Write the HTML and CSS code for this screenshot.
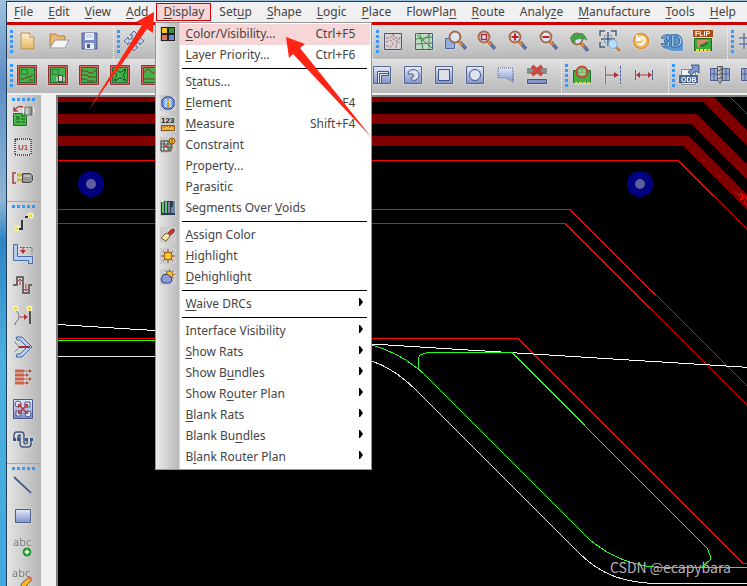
FILE: index.html
```
<!DOCTYPE html>
<html lang="en">
<head>
    <meta charset="utf-8">
    <title>PCB Editor</title>
    <link rel="stylesheet" href="styles.css">
</head>
<body>
    <!-- icon set -->
    <svg class="defs" width="0" height="0">
        <defs>
            <linearGradient id="blue" x1="0" y1="0" x2="0" y2="1"><stop offset="0" stop-color="#e6eaf6"/><stop offset="1" stop-color="#7f92cb"/></linearGradient>
            <linearGradient id="sand" x1="0" y1="0" x2="0" y2="1"><stop offset="0" stop-color="#fff0cc"/><stop offset="1" stop-color="#e5b868"/></linearGradient>
            <linearGradient id="steel" x1="0" y1="0" x2="1" y2="0"><stop offset="0" stop-color="#eee"/><stop offset="1" stop-color="#777"/></linearGradient>
        </defs>
        <symbol id="new" viewBox="0 0 24 24"><path d="M6 4h9l4 4v12H6z" fill="url(#sand)" stroke="#b48a48"/><path d="M15 4v4h4" fill="#fff8e4" stroke="#b48a48"/></symbol>
        <symbol id="open" viewBox="0 0 24 24"><path d="M4 18V5h6l2 2h7v4" fill="#e9b873" stroke="#b0793a"/><path d="M4 19l5-8h14l-4 8z" fill="#f5f5f5" stroke="#999"/></symbol>
        <symbol id="save" viewBox="0 0 24 24"><path d="M5 4h15v16H5z" fill="#7b8dc4" stroke="#46598f"/><path d="M8 4h9v7H8z" fill="#eef1fb"/><path d="M9 6h7M9 8h7" stroke="#b5bdda"/><path d="M8 14h9v6H8z" fill="#e8ebf6"/><path d="M10 15h3v4h-3z" fill="#46598f"/></symbol>
        <symbol id="move" viewBox="0 0 24 24"><path d="M12 2l4 4h-2v4h4V8l4 4-4 4v-2h-4v4h2l-4 4-4-4h2v-4H6v2l-4-4 4-4v2h4V6H8z" fill="#c3d0e4" stroke="#566c91"/></symbol>
        <symbol id="ratsred" viewBox="0 0 24 24"><path d="M3.500 4.500h17v16h-17z" fill="#d4d4d8" stroke="#4c5570"/><path d="M5 9h4l3-4M13 5l-1 5 7 4M5 13l5-2 2 4-4 5M15 19l1-6 4-5M5 17h4M14 9h5" fill="none" stroke="#b37174" stroke-dasharray="3 1"/></symbol>
        <symbol id="ratsgreen" viewBox="0 0 24 24"><path d="M3.500 4.500h17v16h-17z" fill="#c9d6cc" stroke="#44617a"/><path d="M4 10l16-2M8 5l3 15M4 15l16-1M17 5v15M5 6l15 13M10 12l8-7" fill="none" stroke="#3d9144"/></symbol>
        <symbol id="lens" viewBox="0 0 24 24"><path d="M15 13l6 7" stroke="#60739d" stroke-width="4"/><path d="M13 12l4 4" stroke="#e0863c" stroke-width="3"/><circle cx="10" cy="8" r="5.500" fill="#dce4f2" stroke="#a36a46" stroke-width="2"/></symbol>
        <symbol id="zoomfit" viewBox="0 0 24 24"><path d="M2.500 9.500h9v10h-9z" fill="#93aedb" stroke="#4b67a5"/><use href="#lens" x="2" width="24" height="24"/></symbol>
        <symbol id="zoombox" viewBox="0 0 24 24"><use href="#lens" width="24" height="24"/><path d="M7.500 5.500h5v5h-5z" fill="none" stroke="#b22338" stroke-width="1.500"/></symbol>
        <symbol id="zoomin" viewBox="0 0 24 24"><use href="#lens" width="24" height="24"/><path d="M6.500 8h7M10 4.500v7" stroke="#c21d2d" stroke-width="2"/></symbol>
        <symbol id="zoomout" viewBox="0 0 24 24"><use href="#lens" width="24" height="24"/><path d="M6.500 8h7" stroke="#c21d2d" stroke-width="2"/></symbol>
        <symbol id="zoomprev" viewBox="0 0 24 24"><use href="#lens" y="2" width="24" height="24"/><path d="M3 9l5-5v3c5-4 9-4 12 4-4-2-7-2-12 0v3z" fill="#43a548" stroke="#267b37" stroke-width=".500"/></symbol>
        <symbol id="zoomall" viewBox="0 0 24 24"><path d="M2 7V2h5M13 2h5v5M2 13v5h5M10 3v14M3 10h14" fill="none" stroke="#44617a" stroke-width="1.500"/><path d="M6.500 6.500h7v7h-7z" fill="none" stroke="#839ab5"/><path d="M17 17l5 5" stroke="#c48445" stroke-width="3"/><circle cx="15" cy="15" r="4.500" fill="#bcddfa" stroke="#77a4cb"/></symbol>
        <symbol id="redraw" viewBox="0 0 24 24"><circle cx="12" cy="12" r="7.500" fill="#f9bd62" stroke="#d89135" stroke-width="1.500"/><path d="M8 6v5h5M9 10c4-4 8 0 6 3-1 2-3 3-6 2" fill="none" stroke="#fff" stroke-width="2"/></symbol>
        <symbol id="grid" viewBox="0 0 24 24"><path d="M8 4v16M14 4v16M20 4v16M3 9h20M3 15h20" stroke="#61759d" stroke-width="1.500"/></symbol>

        <symbol id="pcb" viewBox="0 0 24 24"><path d="M2.500 2.500h19v19h-19z" fill="#45b249" stroke="#9c2b2f"/><path d="M3.500 3.500h17v17h-17z" fill="none" stroke="#e26464"/><path d="M4.500 4.500h15v15h-15z" fill="none" stroke="#246a33"/></symbol>
        <symbol id="pcb1" viewBox="0 0 24 24"><use href="#pcb" width="24" height="24"/><path d="M6.500 6.500h6v5h-6z" fill="none" stroke="#174f25" stroke-dasharray="1 1"/><path d="M6 16h3l3-2h3l3-2M14 17h4" fill="none" stroke="#743624"/></symbol>
        <symbol id="pcb2" viewBox="0 0 24 24"><use href="#pcb" width="24" height="24"/><path d="M6.500 6.500h6v5h-6z" fill="none" stroke="#174f25" stroke-dasharray="1 1"/><path d="M12.500 12.500h4v6h-4z" fill="#ddd" stroke="#444"/><path d="M11 14v4M18 14v4" stroke="#eee"/></symbol>
        <symbol id="pcb3" viewBox="0 0 24 24"><use href="#pcb" width="24" height="24"/><path d="M5 8h5l3 2h2l4-3M5 12h5l2 2h7M5 16h4l2 2h7" fill="none" stroke="#743624"/></symbol>
        <symbol id="pcb4" viewBox="0 0 24 24"><use href="#pcb" width="24" height="24"/><path d="M7 7h2l2 2h3l2-2M7 17h2l2-2h3l2 2M7 8v2l2 2-2 3M17 8v2l-2 2 2 3" fill="none" stroke="#174f25"/><path d="M6 6h2v2H6zM16 6h2v2h-2zM6 16h2v2H6zM16 16h2v2h-2z" fill="#174f25"/></symbol>
        <symbol id="pcb5" viewBox="0 0 24 24"><use href="#pcb" width="24" height="24"/><path d="M4 10c3 0 3-4 5-4s3 4 5 4 3-3 5-3M5 16h14" fill="none" stroke="#913329"/></symbol>
        <symbol id="tile" viewBox="0 0 24 24"><path d="M3.500 3.500h17v17h-17z" fill="url(#blue)" stroke="#556894"/></symbol>
        <symbol id="shapeadd" viewBox="0 0 24 24"><use href="#tile" width="24" height="24"/><path d="M7.500 20V8.500h11v4h-7V20" fill="#e2e6ee" stroke="#435584"/><path d="M9.500 20v-9.500h9" fill="none" stroke="#435584"/></symbol>
        <symbol id="shapearc" viewBox="0 0 24 24"><use href="#tile" width="24" height="24"/><path d="M7 11c0-6 11-6 11 1 0 6-8 7-8 3 3 0 4-4 1-4z" fill="#dfe3ee" stroke="#435584"/></symbol>
        <symbol id="shaperect" viewBox="0 0 24 24"><use href="#tile" width="24" height="24"/><path d="M6.500 6.500h11v11h-11z" fill="#dfe1e8" stroke="#435584"/></symbol>
        <symbol id="shapecirc" viewBox="0 0 24 24"><use href="#tile" width="24" height="24"/><circle cx="12" cy="12" r="5.500" fill="#dfe3ee" stroke="#435584"/></symbol>
        <symbol id="shapesel" viewBox="0 0 24 24"><path d="M4 5h16v14L11 15H4z" fill="url(#blue)"/><path d="M4 15V5h15v14" fill="none" stroke="#435584" stroke-dasharray="1 1"/><path d="M4 15h8l7 5" fill="none" stroke="#8b96b5"/></symbol>
        <symbol id="shapedel" viewBox="0 0 24 24"><path d="M2 5h20v6H2z" fill="#8c8c8c"/><path d="M7 3l10 9M17 3L7 12" stroke="#cc4a3c" stroke-width="4"/><path d="M2.500 16.500h19v4h-19z" fill="#8195c9" stroke="#43557f"/></symbol>
        <symbol id="drc" viewBox="0 0 24 24"><path d="M3.500 7.500h17v12h-17z" fill="#49ad42" stroke="#1a6a23"/><path d="M5 20h15" stroke="#eada45" stroke-width="2" stroke-dasharray="3 1"/><circle cx="12" cy="9" r="5.500" fill="#79b96a" stroke="#c94040" stroke-width="2"/><path d="M9 8h2M13 8h2M9 11h6" stroke="#d5e8b8"/></symbol>
        <symbol id="gap" viewBox="0 0 24 24"><path d="M4.500 3v18" stroke="#777"/><path d="M19.500 3v18" stroke="#4b638e" stroke-dasharray="3 1"/><path d="M5 12h9" stroke="#a5333a"/><path d="M13 9l5 3-5 3z" fill="#a5333a"/></symbol>
        <symbol id="dim" viewBox="0 0 24 24"><path d="M3.500 7v10M20.500 7v10" stroke="#4b5a80"/><path d="M6 12h12" stroke="#a5333a"/><path d="M4 12l4-3v6zM20 12l-4-3v6z" fill="#a5333a"/></symbol>
        <symbol id="drill" viewBox="0 0 24 24"><path d="M2.500 5.500h19v12h-19z" fill="#9aabd3" stroke="#4a5d8d"/><path d="M6 6v11M18 6v11M3 11h18" stroke="#4a5d8d"/><path d="M9.500 3.500h5v13l-2.500 4-2.500-4z" fill="url(#steel)" stroke="#555"/><path d="M10 8l4-2M10 12l4-2M10 16l4-2" stroke="#555"/></symbol>

        <symbol id="place" viewBox="0 0 24 24"><path d="M2.500 9.500h13v12h-13z" fill="#44b948" stroke="#23702d"/><path d="M5 13h3v2H5M10 12h4M10 15h4M5 18h4M11 18h3" fill="none" stroke="#17571f"/><path d="M4 6c2-4 6-4 8-3M3 3v4h4" fill="none" stroke="#b04040" stroke-width="1.500"/><path d="M14 3h7v8h-7z" fill="url(#steel)" stroke="#666"/><path d="M12.500 4v6M22.500 4v6" stroke="#eee"/></symbol>
        <symbol id="swap" viewBox="0 0 24 24"><path d="M5 7H2v10h3" fill="none" stroke="#ad3c3c" stroke-width="1.500"/><path d="M6 9h6M6 14h6" stroke="#d2b72b" stroke-width="3"/><path d="M11.500 7.500h8l2 2v5l-2 2h-8z" fill="#999" stroke="#444"/><path d="M13 10h6" stroke="#ddd"/></symbol>
        <symbol id="connect" viewBox="0 0 24 24"><path d="M6 18h5v-9h2M14 6h4" fill="none" stroke="#333" stroke-width="2" stroke-dasharray="14 2 3 2"/><path d="M3.500 15.500h4v4h-4zM17.500 2.500h4v4h-4z" fill="#e8dc35" stroke="#fff9ba"/></symbol>
        <symbol id="slide" viewBox="0 0 24 24"><path d="M2.500 2.500v16h15v3h4v-7h-15v-12z" fill="#b5cdf0" stroke="#4a6ba5"/><path d="M9 5.500h12v7" fill="none" stroke="#566787" stroke-dasharray="2 1"/><path d="M12 5v4" stroke="#a5333a"/><path d="M9 8h6l-3 4z" fill="#a5333a"/></symbol>
        <symbol id="delay" viewBox="0 0 24 24"><path d="M2 12h4V4h6v16h6v-8h3" fill="none" stroke="#444" stroke-width="1.500"/><path d="M9 12V6M7 8l2-2 2 2M15 11v7M13 16l2 2 2-2" fill="none" stroke="#ad3338"/></symbol>
        <symbol id="snap" viewBox="0 0 24 24"><path d="M4 5c2 3 4 4 4 8s-4 4-4 8" fill="none" stroke="#666"/><path d="M19 5v15" stroke="#222" stroke-width="1.500"/><path d="M2.500 2.500h4v4h-4zM16.500 2.500h4v4h-4z" fill="#e8dc35" stroke="#fff9ba"/><path d="M9 13h5" stroke="#ad3338"/><path d="M13 10l4 3-4 3z" fill="#ad3338"/></symbol>
        <symbol id="miter" viewBox="0 0 24 24"><path d="M5 2h6l10 10-10 10H5l1-3h3l7-7-7-7H6z" fill="#b4cdf0" stroke="#426397"/><path d="M4 7l4 5-4 5" fill="none" stroke="#445a76" stroke-dasharray="2 1"/><path d="M8 12h11" stroke="#9e2f38" stroke-width="2"/></symbol>
        <symbol id="fanout" viewBox="0 0 24 24"><path d="M4 5h9M4 9h9M4 13h9M4 17h9" stroke="#cc6248" stroke-width="3"/><path d="M13 5h7M13 9h4M13 13h7M13 17h4" stroke="#b2543f"/><path d="M18 3l3 2-3 2zM15 7l3 2-3 2zM18 11l3 2-3 2zM15 15l3 2-3 2z" fill="#b2543f"/></symbol>
        <symbol id="custom" viewBox="0 0 24 24"><path d="M2.500 2.500h19v19h-19z" fill="url(#blue)" stroke="#465b89"/><path d="M14 5h5v5h-5zM5 14h5v5H5z" fill="#dce2f1" stroke="#465b89"/><circle cx="17" cy="17" r="3" fill="#dce2f1" stroke="#465b89"/><circle cx="7" cy="7" r="3" fill="#dce2f1" stroke="#465b89"/><path d="M8 8l8 8M16 8l-8 8" stroke="#b53a42" stroke-width="1.500"/><path d="M7 7h4l-4 4zM17 7h-4l4 4zM7 17h4l-4-4zM17 17h-4l4-4z" fill="#b53a42"/></symbol>
        <symbol id="tune" viewBox="0 0 24 24"><path d="M3 12V7q0-3 3-3h4q3 0 3 3v7q0 2 2 2M7 12V9q0-2 2-2v8q0 4 3 4h5q3 0 3-3v-5M16 16v-5" fill="none" stroke="#46597c" stroke-width="1.500"/><path d="M2 10h3v3H2zM6 10h3v3H6zM14 10h3v3h-3zM19 10h3v3h-3z" fill="#38568c"/></symbol>
        <symbol id="line" viewBox="0 0 24 24"><path d="M3 4l17 16" stroke="#4a5f8b" stroke-width="2"/></symbol>
        <symbol id="rect" viewBox="0 0 24 24"><path d="M4.500 5.500h15v13h-15z" fill="url(#blue)" stroke="#4a5f8b"/></symbol>

        <symbol id="m-color" viewBox="0 0 16 16"><path d="M1 1h14v14H1z" fill="#222"/><path d="M2 2h5v5H2z" fill="#f5c624"/><path d="M9 2h5v5H9z" fill="#3b9138"/><path d="M2 9h5v5H2z" fill="#d9785c"/><path d="M9 9h5v5H9z" fill="#668bd0"/></symbol>
        <symbol id="m-info" viewBox="0 0 16 16"><path d="M5 2h6l3 3v6l-3 3H5l-3-3V5z" fill="#7da4e8" stroke="#1d2e92"/><path d="M5 4h6v8H5z" fill="#b5d1ff"/><path d="M8 4v2M8 7v5" stroke="#c7a30c" stroke-width="2"/></symbol>
        <symbol id="m-constraint" viewBox="0 0 16 16"><path d="M1 4h10v10H1z" fill="#ddd" stroke="#333"/><path d="M1 7h10M1 10h10M4 4v10M8 4v10" stroke="#444"/><path d="M5 8h2v2H5z" fill="#e22"/><path d="M8 10h2v3H8z" fill="#393"/><circle cx="12" cy="4" r="3" fill="#f0b322" stroke="#87530a"/><path d="M12 2v4M12 7v5" stroke="#87530a"/></symbol>
        <symbol id="m-segments" viewBox="0 0 16 16"><path d="M1 1h14v14H1z" fill="#283b55"/><path d="M3 1v12M6 1v12" stroke="#67bf67" stroke-width="2"/><path d="M9 2v11M12 7v6M14 1v12" stroke="#bcd0ed"/><path d="M1 1h2" stroke="#e8eff5" stroke-width="2"/></symbol>
        <symbol id="m-assign" viewBox="0 0 16 16"><path d="M14 2l-3 1-4 4 2 2 5-4z" fill="#d33" stroke="#822"/><path d="M8 6L5 7l-4 4 5 3 4-5z" fill="#f4e6a0" stroke="#6e603b"/></symbol>
        <symbol id="m-sun" viewBox="0 0 16 16"><path d="M8 1v14M1 8h14M3 3l10 10M13 3L3 13" stroke="#9d3d18"/><circle cx="8" cy="8" r="4" fill="#f9c926" stroke="#a44f12"/></symbol>
        <symbol id="m-cloud" viewBox="0 0 16 16"><use href="#m-sun" x="3" y="-1" width="13" height="13"/><path d="M2 13l-1-3 2-4 4-1 4 3 1 4-2 2H4z" fill="#8d9ad5" stroke="#303f84"/></symbol>
        <symbol id="arrow" viewBox="0 0 8 8"><path d="M2 0h1l3 4-3 4H2z" fill="#000"/></symbol>
    </svg>

    <div class="app">
        <nav class="menubar">
            <button><u>F</u>ile</button>
            <button><u>E</u>dit</button>
            <button><u>V</u>iew</button>
            <button><u>A</u>dd</button>
            <div class="dropdown">
                <button class="open"><u>D</u>isplay</button>
                <div class="menu">
                    <button class="active"><svg class="mi"><use href="#m-color"/></svg><span><u>C</u>olor/Visibility...</span><kbd>Ctrl+F5</kbd></button>
                    <button><span><u>L</u>ayer Priority...</span><kbd>Ctrl+F6</kbd></button>
                    <hr>
                    <button><span>S<u>t</u>atus...</span></button>
                    <button><svg class="mi"><use href="#m-info"/></svg><span><u>E</u>lement</span><kbd>F4</kbd></button>
                    <button>
                        <svg class="mi" viewBox="0 0 16 16"><text class="t123" x="1" y="7">123</text><path d="M1.500 9.500h13v5h-13z" fill="#efb33e" stroke="#8c561b"/><path d="M4 9v3M7 9v2M10 9v3M13 9v2" stroke="#8c561b"/></svg>
                        <span><u>M</u>easure</span><kbd>Shift+F4</kbd>
                    </button>
                    <button><svg class="mi"><use href="#m-constraint"/></svg><span>Constra<u>i</u>nt</span></button>
                    <button><span>P<u>r</u>operty...</span></button>
                    <button><span>P<u>a</u>rasitic</span></button>
                    <button><svg class="mi"><use href="#m-segments"/></svg><span>Segments Over <u>V</u>oids</span></button>
                    <hr>
                    <button><svg class="mi"><use href="#m-assign"/></svg><span><u>A</u>ssign Color</span></button>
                    <button><svg class="mi"><use href="#m-sun"/></svg><span><u>H</u>ighlight</span></button>
                    <button><svg class="mi"><use href="#m-cloud"/></svg><span><u>D</u>ehighlight</span></button>
                    <hr>
                    <button><span><u>W</u>aive DRCs</span><svg class="sub"><use href="#arrow"/></svg></button>
                    <hr>
                    <button><span>Interface Visibility</span><svg class="sub"><use href="#arrow"/></svg></button>
                    <button><span><u>S</u>how Rats</span><svg class="sub"><use href="#arrow"/></svg></button>
                    <button><span>Show B<u>u</u>ndles</span><svg class="sub"><use href="#arrow"/></svg></button>
                    <button><span>Show R<u>o</u>uter Plan</span><svg class="sub"><use href="#arrow"/></svg></button>
                    <button><span><u>B</u>lank Rats</span><svg class="sub"><use href="#arrow"/></svg></button>
                    <button><span>Blank Bu<u>n</u>dles</span><svg class="sub"><use href="#arrow"/></svg></button>
                    <button><span>B<u>l</u>ank Router Plan</span><svg class="sub"><use href="#arrow"/></svg></button>
                </div>
            </div>
            <button>Set<u>u</u>p</button>
            <button><u>S</u>hape</button>
            <button><u>L</u>ogic</button>
            <button><u>P</u>lace</button>
            <button>FlowPla<u>n</u></button>
            <button><u>R</u>oute</button>
            <button>Analy<u>z</u>e</button>
            <button><u>M</u>anufacture</button>
            <button><u>T</u>ools</button>
            <button><u>H</u>elp</button>
        </nav>

        <div class="toolbar">
            <div class="group">
                <button aria-label="New"><svg><use href="#new"/></svg></button>
                <button aria-label="Open"><svg><use href="#open"/></svg></button>
                <button aria-label="Save"><svg><use href="#save"/></svg></button>
            </div>
            <div class="group">
                <button aria-label="Move"><svg><use href="#move"/></svg></button>
                <button aria-label="Copy"></button>
                <button aria-label="Delete"></button>
            </div>
            <div class="group">
                <button aria-label="Undo"></button>
                <button aria-label="Redo"></button>
            </div>
            <div class="group">
                <button aria-label="Fix"></button>
                <button aria-label="Unfix"></button>
            </div>
            <div class="group">
                <button aria-label="Unrats all"><svg><use href="#ratsred"/></svg></button>
                <button aria-label="Rats all"><svg><use href="#ratsgreen"/></svg></button>
                <button aria-label="Zoom fit"><svg><use href="#zoomfit"/></svg></button>
                <button aria-label="Zoom points"><svg><use href="#zoombox"/></svg></button>
                <button aria-label="Zoom in"><svg><use href="#zoomin"/></svg></button>
                <button aria-label="Zoom out"><svg><use href="#zoomout"/></svg></button>
                <button aria-label="Zoom previous"><svg><use href="#zoomprev"/></svg></button>
                <button aria-label="Zoom selection"><svg><use href="#zoomall"/></svg></button>
                <button aria-label="Redraw"><svg><use href="#redraw"/></svg></button>
                <button aria-label="3D view">
                    <svg viewBox="0 0 24 24"><path d="M6 5h12q6 4 5 17H12L3 19z" fill="#5d98cf"/><text class="t3d" x="1" y="18">3D</text></svg>
                </button>
                <button aria-label="Flip">
                    <svg viewBox="0 0 24 24"><path d="M2 1h20v7H2z" fill="#a84a12"/><text class="tflip" x="4" y="7">FLIP</text><path d="M3.500 9.500h17v12h-17z" fill="#3ba83b" stroke="#166b20"/><path d="M6 11h12l-4 4-5 4-3-2z" fill="#d68966"/><path d="M9 17c2-1 5 0 7-4" fill="none" stroke="#197525" stroke-width="2"/><path d="M5 21h14" stroke="#f5df47" stroke-width="2" stroke-dasharray="3 1"/></svg>
                </button>
            </div>
            <div class="group">
                <button aria-label="Grid"><svg><use href="#grid"/></svg></button>
            </div>
        </div>

        <div class="toolbar">
            <div class="group">
                <button aria-label="General edit"><svg><use href="#pcb1"/></svg></button>
                <button aria-label="Placement edit"><svg><use href="#pcb2"/></svg></button>
                <button aria-label="Etch edit"><svg><use href="#pcb3"/></svg></button>
                <button aria-label="Shape edit"><svg><use href="#pcb4"/></svg></button>
                <button aria-label="Signal integrity"><svg><use href="#pcb5"/></svg></button>
                <button aria-label="RF edit"></button>
                <button aria-label="Flow planning"></button>
                <button aria-label="Symbol edit"></button>
            </div>
            <div class="group">
                <button aria-label="Polygon"></button>
                <button aria-label="Rectangle"></button>
                <button aria-label="Circle"></button>
                <button aria-label="Shape add"><svg><use href="#shapeadd"/></svg></button>
                <button aria-label="Void polygon"><svg><use href="#shapearc"/></svg></button>
                <button aria-label="Void rectangle"><svg><use href="#shaperect"/></svg></button>
                <button aria-label="Void circle"><svg><use href="#shapecirc"/></svg></button>
                <button aria-label="Edit boundary"><svg><use href="#shapesel"/></svg></button>
                <button aria-label="Delete islands"><svg><use href="#shapedel"/></svg></button>
            </div>
            <div class="group">
                <button aria-label="DRC"><svg><use href="#drc"/></svg></button>
                <button aria-label="Clearance"><svg><use href="#gap"/></svg></button>
                <button aria-label="Dimension"><svg><use href="#dim"/></svg></button>
            </div>
            <div class="group">
                <button aria-label="ODB out">
                    <svg viewBox="0 0 24 24"><path d="M4.500 6.500h14v15h-14z" fill="#f2f2f2" stroke="#888"/><path d="M11 9l5-4-2-3h8v8l-3-2-5 4z" fill="#7f98c6" stroke="#3f5789"/><path d="M2 12h19v8H2z" fill="#496495"/><text class="todb" x="4" y="19">ODB</text></svg>
                </button>
                <button aria-label="NC drill"><svg><use href="#drill"/></svg></button>
                <button aria-label="NC legend"><svg><use href="#drill"/></svg></button>
            </div>
        </div>

        <main class="workspace">
            <div class="sidebar">
                <div class="vgroup">
                    <button aria-label="Place manual"><svg><use href="#place"/></svg></button>
                    <button aria-label="Place part">
                        <svg viewBox="0 0 24 24"><path d="M4 4.500h16M4 19.500h16M4.500 4v16M19.500 4v16" stroke="#3d5c94" stroke-width="3" stroke-dasharray="1 1"/><path d="M5 5h14v14H5z" fill="#d9d9dc"/><text class="tu1" x="7" y="15">U1</text></svg>
                    </button>
                    <button aria-label="Swap pins"><svg><use href="#swap"/></svg></button>
                </div>
                <div class="vgroup">
                    <button aria-label="Add connect"><svg><use href="#connect"/></svg></button>
                    <button aria-label="Slide"><svg><use href="#slide"/></svg></button>
                    <button aria-label="Delay tune"><svg><use href="#delay"/></svg></button>
                    <button aria-label="Custom smooth"><svg><use href="#snap"/></svg></button>
                    <button aria-label="Vertex"><svg><use href="#miter"/></svg></button>
                    <button aria-label="Create fanout"><svg><use href="#fanout"/></svg></button>
                    <button aria-label="Spread"><svg><use href="#custom"/></svg></button>
                    <button aria-label="Phase tune"><svg><use href="#tune"/></svg></button>
                </div>
                <div class="vgroup">
                    <button aria-label="Add line"><svg><use href="#line"/></svg></button>
                    <button aria-label="Add rect"><svg><use href="#rect"/></svg></button>
                    <button aria-label="Add text">
                        <svg viewBox="0 0 24 24"><text class="tabc" x="2" y="11">abc</text><circle cx="16" cy="17" r="4.500" fill="#24992b"/><path d="M13.500 17h5M16 14.500v5" stroke="#fff" stroke-width="1.500"/></svg>
                    </button>
                    <button aria-label="Edit text">
                        <svg viewBox="0 0 24 24"><text class="tabc" x="1" y="11">abc</text><path d="M9 22l2-5 7-6 3 3-7 7z" fill="#f5b52c" stroke="#79563a"/><path d="M17 12l3 3 2-2-3-3z" fill="#dc7060"/></svg>
                    </button>
                </div>
            </div>

            <div class="board">
                <svg viewBox="58 97 689 489" preserveAspectRatio="xMinYMin slice">
                    <g fill="none" shape-rendering="crispEdges">
                        <!-- wide traces -->
                        <g stroke="#800000" stroke-width="10">
                            <path d="M58 97H706L766 157"/>
                            <path d="M58 119H694L766 191"/>
                            <path d="M58 141H686L766 221"/>
                        </g>
                        <g stroke="#ff0000">
                            <path d="M730 97l30 30"/>
                            <path d="M58 160.500H678L766 248"/>
                            <path d="M58 209.500H570L766 405"/>
                            <path d="M58 223.500H565L766 424"/>
                            <path d="M58 338.500H518L743 563.500H766"/>
                            <path d="M738 196l3-3 2 3-3 3 1 1 4-4 2 3-3 3 3 3"/>
                        </g>
                        <path stroke="#fff" d="M58 324.500L766 368.500"/>
                        <g stroke="#1eff1e">
                            <path d="M58 340.500H340C370 341 400 352 424 374L590 540C607 554 630 567.500 665 567.500H766"/>
                            <path d="M424 374L419 369 418 359 420 355 427 352.500H512L707 548 710 555V560L702 567"/>
                        </g>
                        <path stroke="#e6e6e6" d="M58 356.500H340C372 357 392 367 415 389L577 551C600 575 625 583.500 660 583.500H766"/>
                    </g>
                    <g fill="#000080"><circle cx="91" cy="184" r="13"/><circle cx="640" cy="184" r="13"/></g>
                    <g fill="#5f5f9f"><circle cx="91" cy="184" r="5"/><circle cx="640" cy="184" r="5"/></g>
                    <text class="watermark" x="610" y="573">CSDN @ecapybara</text>
                </svg>
            </div>
        </main>
    </div>

    <!-- callout arrows on top of everything -->
    <svg class="callouts" width="400" height="150" fill="#ff2414">
        <path d="M154 12L136 22 142 25 88 111 147 29 153 33z"/>
        <path d="M286 37L305 44 300 48 372 138 293 54 289 58z"/>
    </svg>
</body>
</html>
```
FILE: styles.css
```
* {
    box-sizing: border-box;
}

body {
    margin: 0;
    height: 100vh;
    overflow: hidden;
    position: relative;
    padding: 1px 0 0 6px;
    font-family: "Noto Sans", "Open Sans", sans-serif;
    font-size: 12px;
    color: #444;
    background: linear-gradient(to bottom, #9fc0dc 0, #5c8fc4 80px, #8fb4d4 200px, #2f84c4 240px, #4bb0e0 360px, #42a8dc 100%);
}

.defs {
    position: absolute;
}

button {
    border: none;
    padding: 0;
    margin: 0;
    background: none;
    font: inherit;
    color: inherit;
    flex: none;
}

u {
    text-underline-offset: 2px;
}

.app {
    height: 100%;
    display: flex;
    flex-direction: column;
    background: #f0f0f0;
    border-top: 1px solid #1f3d5c;
    border-left: 1px solid #1f3d5c;
}

/* menu bar */
.menubar {
    display: flex;
    flex: none;
    gap: 1px;
    height: 23px;
    padding-top: 1px;
    border-bottom: 3px solid #cc0000;
}

.menubar > button,
.open {
    height: 18px;
    padding: 0 7px;
    line-height: 18px;
    white-space: nowrap;
}

.dropdown {
    position: relative;
    flex: none;
    height: 18px;
    line-height: 18px;
}

.open {
    background: #f6d6d6;
    box-shadow: inset 0 0 0 1px #cc0000;
}

.menu {
    position: absolute;
    z-index: 5;
    top: 19px;
    left: -1px;
    width: 217px;
    display: flex;
    flex-direction: column;
    padding: 1px;
    border: 1px solid #979797;
    background: linear-gradient(to right, #ececec 0, #b8b8b8 23px, #fff 24px);
}

.menu button {
    display: flex;
    align-items: center;
    height: 21px;
    margin-left: 23px;
    padding: 0 15px 1px 5px;
    text-align: left;
    line-height: 20px;
    white-space: nowrap;
}

.menu .active {
    background: #f6d6d6;
}

.menu span {
    flex: 1;
}

.menu kbd {
    font: inherit;
}

.menu hr {
    width: 185px;
    height: 1px;
    margin: 2px 0 3px 25px;
    border: none;
    background: #000;
}

.mi {
    width: 16px;
    height: 16px;
    margin: 0 9px 0 -25px;
    background: #ccc;
}

.sub {
    width: 8px;
    height: 8px;
    margin: -4px -10px 0 0;
}

/* toolbars */
.toolbar {
    display: flex;
    flex: none;
    height: 34px;
    overflow: hidden;
    border-top: 1px solid #e6e6e6;
    background: linear-gradient(to bottom, #dedede, #b8b8b8);
}

.group {
    display: flex;
    flex: none;
    align-items: center;
    padding: 0 7px 3px 0;
    border-right: 1px dotted #fff;
}

.group::before {
    content: "";
    width: 3px;
    height: 23px;
    margin-left: 3px;
    background: repeating-linear-gradient(to bottom, #3399ff 0, #3399ff 3px, transparent 3px, transparent 5px);
}

.group button {
    width: 31px;
}

.group button,
.vgroup button {
    display: block;
    height: 24px;
}

.group svg,
.vgroup svg {
    display: block;
    width: 24px;
    height: 24px;
    filter: drop-shadow(0 0 1px #e4e4e4);
}

.group svg {
    margin-left: 2px;
}

/* lower part */
.workspace {
    display: flex;
    flex: 1;
    min-height: 0;
    padding-top: 2px;
}

.sidebar {
    flex: none;
    width: 34px;
    overflow: hidden;
    background: linear-gradient(to right, #e4e4e4, #b6b6b6);
}

.vgroup {
    display: flex;
    flex-direction: column;
    align-items: center;
    padding: 3px 2px 7px 0;
    border-bottom: 1px solid #a8a8a8;
}

.vgroup::before {
    content: "";
    width: 23px;
    height: 3px;
    background: repeating-linear-gradient(to right, #3399ff 0, #3399ff 3px, transparent 3px, transparent 5px);
}

.vgroup button {
    margin: 3px 0 4px;
}

.board {
    flex: 1;
    min-width: 0;
    margin-left: 15px;
    overflow: hidden;
    border-top: 2px solid #808080;
    border-left: 2px solid #808080;
    background: #000;
}

.board svg {
    display: block;
    width: 100%;
    height: 100%;
}

.watermark {
    font-family: "Noto Sans CJK SC", sans-serif;
    font-size: 14px;
    fill: #b4b4b4;
}

.callouts {
    position: absolute;
    z-index: 10;
    top: 0;
    left: 0;
    pointer-events: none;
}

/* lettering inside icons */
.t3d {
    font: bold 17px "Liberation Sans", sans-serif;
    fill: #a9d0f2;
    stroke: #35669c;
}

.tflip {
    font: bold 7px "Liberation Sans", sans-serif;
    fill: #fff;
}

.todb {
    font: bold 7px "Liberation Sans", sans-serif;
    fill: #fff;
}

.tu1 {
    font: bold 8px "Liberation Sans", sans-serif;
    fill: #b04040;
}

.tabc {
    font: 11px "Noto Sans", sans-serif;
    fill: #777;
}

.t123 {
    font: bold 8px "Liberation Sans", sans-serif;
    fill: #222;
}
```
